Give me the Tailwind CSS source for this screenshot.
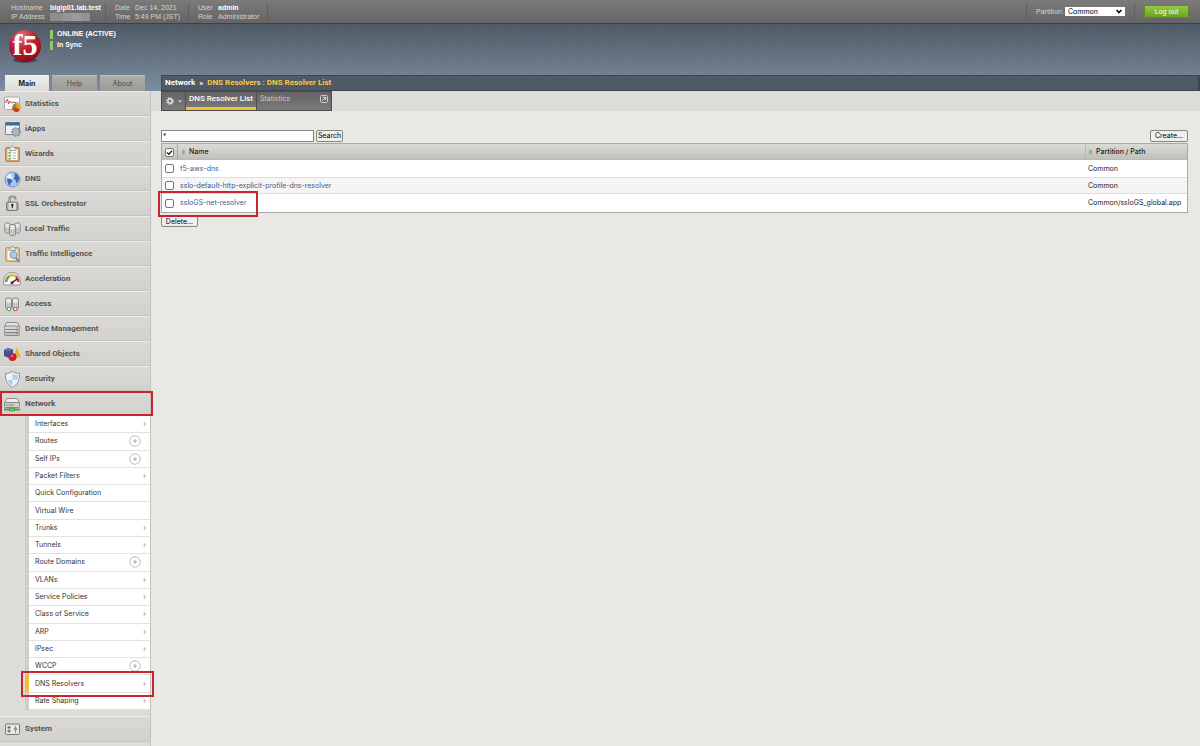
<!DOCTYPE html>
<html lang="en">
  <head>
    <meta charset="UTF-8" />
    <meta name="viewport" content="width=device-width, initial-scale=1.0" />
    <title>BIG-IP - DNS Resolver List</title>
    <script src="https://cdn.jsdelivr.net/npm/@tailwindcss/browser@4"></script>
  </head>
  <body class="flex min-h-screen flex-col bg-[#e9e8e4] font-[Inter,'Liberation_Sans',sans-serif] text-[7px] leading-[10px] text-[#222]">
    <!-- shared glyphs -->
    <svg class="hidden">
      <symbol id="arrow" viewBox="0 0 4 6"><path d="M1 1L2.800 3L1 5z" fill="#ccc" stroke="#bbb" stroke-width="0.500" /></symbol>
      <symbol id="plus" viewBox="0 0 12 12">
        <circle cx="6" cy="6" r="5.2" fill="#fff" stroke="#b5b5b5" stroke-width="0.9" />
        <path d="M6 4v4M4 6h4" stroke="#aaa" stroke-width="1" />
      </symbol>
      <symbol id="sort" viewBox="0 0 5 7"><path d="M0.3 3L2.5 0.5L4.7 3zM0.3 4L2.5 6.5L4.7 4z" fill="#8d8d8b" /></symbol>
      <symbol id="server" viewBox="0 0 7 13">
        <rect x="0.5" y="1" width="6" height="11" rx="1.800" fill="#d2d2d0" stroke="#777" stroke-width="0.8" />
        <path d="M1.500 3h4M1.500 4.800h4" stroke="#fff" stroke-width="0.9" />
        <path d="M2.300 6v5M4.700 6v5" stroke="#a5a5a3" stroke-width="0.6" />
      </symbol>
    </svg>

    <!-- status bar -->
    <header class="flex h-[24px] items-center justify-between border-b border-[#3e4246] bg-linear-to-b from-[#7b7b7b] to-[#646464] font-['Liberation_Sans',sans-serif] leading-[9px] text-[#d4d4d4]">
      <div class="flex h-full items-center">
        <dl class="grid h-[18px] grid-cols-[39px_auto] border-r border-[#606060] pr-[9px] pl-[11px]">
          <dt>Hostname</dt>
          <dd class="w-[46px] font-bold whitespace-nowrap text-white">bigip01.lab.test</dd>
          <dt>IP Address</dt>
          <dd class="flex h-[8px] w-[40px] self-end">
            <span class="w-[13px] bg-[#8d8d8d]"></span>
            <span class="w-[9px] bg-[#959595]"></span>
            <span class="w-[9px] bg-[#9b9b9b]"></span>
            <span class="w-[9px] bg-[#939393]"></span>
          </dd>
        </dl>
        <dl class="grid h-[18px] grid-cols-[20px_44px] border-r border-[#606060] pr-[9px] pl-[9px] whitespace-nowrap">
          <dt>Date</dt>
          <dd>Dec 14, 2021</dd>
          <dt>Time</dt>
          <dd>5:49 PM (JST)</dd>
        </dl>
        <dl class="grid h-[18px] grid-cols-[20px_40px] border-r border-[#606060] pr-[9px] pl-[9px]">
          <dt>User</dt>
          <dd class="font-bold text-white">admin</dd>
          <dt>Role</dt>
          <dd>Administrator</dd>
        </dl>
      </div>
      <div class="flex h-[18px] items-center border-l border-[#606060] pr-[11px] pl-[9px]">
        <label for="partition" class="w-[29px]">Partition:</label>
        <div class="relative h-[9px] w-[60px]">
          <select id="partition" class="block h-[9px] w-full appearance-none bg-white pl-[3px] font-[Inter] text-[7px] leading-[9px] text-black">
            <option>Common</option>
          </select>
          <svg class="pointer-events-none absolute top-[2px] right-[3px] h-[5px] w-[6px]" viewBox="0 0 6 5"><path d="M0.6 1L3 3.6L5.4 1" fill="none" stroke="#000" stroke-width="1.5" /></svg>
        </div>
        <div class="ml-[9px] h-[18px] w-px bg-[#606060]"></div>
        <button class="ml-[9px] h-[13px] w-[45px] border border-[#5d8a25] bg-linear-to-b from-[#96c944] to-[#6aa51c] text-white">Log out</button>
      </div>
    </header>

    <!-- banner with logo, side tabs and page title -->
    <div class="bg-[repeating-linear-gradient(135deg,#ffffff09_0px,#ffffff09_1px,transparent_1px,transparent_3px),linear-gradient(#4d5863,#7a8ca0)]">
      <div class="flex h-[51px] gap-[8px] pt-[5px] pl-[8px]">
        <svg class="h-[36px] w-[34px]" viewBox="0 0 34 36">
          <defs>
            <radialGradient id="ball" cx="0.4" cy="0.2" r="0.8">
              <stop offset="0" stop-color="#e27878" />
              <stop offset="0.5" stop-color="#c4202c" />
              <stop offset="1" stop-color="#8a0d18" />
            </radialGradient>
          </defs>
          <ellipse cx="17" cy="31" rx="12" ry="3" fill="#303943" opacity="0.7" />
          <circle cx="17" cy="17" r="16" fill="url(#ball)" />
          <text x="17" y="26" text-anchor="middle" font-family="Liberation Serif" font-weight="bold" font-size="30" fill="#fff">f5</text>
        </svg>
        <div class="flex flex-col gap-px font-['Liberation_Sans',sans-serif] font-bold text-white">
          <div class="flex h-[10px] items-center gap-[4px]"><span class="h-[9px] w-[3px] bg-[#95c76b]"></span>ONLINE (ACTIVE)</div>
          <div class="flex h-[10px] items-center gap-[4px]"><span class="h-[9px] w-[3px] bg-[#95c76b]"></span>In Sync</div>
        </div>
      </div>
      <div class="flex h-[16px] items-stretch">
        <nav class="flex w-[150px] shrink-0 gap-[3px] pl-[5px] text-[#4a4a48]">
          <button class="w-[44px] border-t border-[#f4f4f2] bg-linear-to-b from-[#eeeeec] to-[#dcdcd8] font-bold text-[#222]">Main</button>
          <button class="w-[45px] border-t border-[#bdbdba] bg-linear-to-b from-[#adada9] to-[#9a9a97]">Help</button>
          <button class="w-[45px] border-t border-[#bdbdba] bg-linear-to-b from-[#adada9] to-[#9a9a97]">About</button>
        </nav>
        <div class="ml-[11px] flex grow items-center gap-[4px] border border-r-2 border-[#3f464e] bg-[#505a67] pl-[3px] font-[Roboto,sans-serif] text-[8px] font-bold text-white">
          <span>Network</span><span>»</span><span class="text-[#f6c944]">DNS Resolvers : DNS Resolver List</span>
        </div>
      </div>
    </div>

    <div class="flex grow">
      <!-- side menu -->
      <aside class="w-[151px] shrink-0 border-r border-[#c2c1bd] bg-[#dddcd8]">
        <ul class="font-[Roboto,sans-serif] text-[8px] font-bold text-[#555553] *:flex *:h-[25px] *:items-center *:gap-[4px] *:border-t *:border-b *:border-t-[#ecebe8] *:border-b-[#c6c5c1] *:bg-linear-to-b *:from-[#dad9d5] *:to-[#d2d1cd] *:pl-[3px]">
          <li>
            <svg class="size-[18px]" viewBox="0 0 18 18">
              <rect x="1.5" y="2" width="15" height="12.5" rx="1" fill="#fafafa" stroke="#aaa" />
              <path d="M3 8V6l1.500-2 1 5 1.500-3 1.500 2 2-1 3 1h2" fill="none" stroke="#b5525a" stroke-width="1" />
              <circle cx="13.5" cy="12.5" r="4.200" fill="#e4a72c" />
              <path d="M13.5 12.5V8.300A4.200 4.200 0 0 0 9.300 12.500z" fill="#6f9f35" />
              <path d="M13.5 12.5H9.300A4.200 4.200 0 0 0 17 15z" fill="#c73c28" />
            </svg>
            <a href="#">Statistics</a>
          </li>
          <li>
            <svg class="size-[18px]" viewBox="0 0 18 18">
              <rect x="2.500" y="2.500" width="14" height="12" rx="0.5" fill="#eef0f3" stroke="#70889f" />
              <path d="M2.500 4h14" stroke="#386c9f" stroke-width="3" />
              <circle cx="13" cy="12" r="3.800" fill="none" stroke="#77848e" stroke-width="2" stroke-dasharray="1.7 1" />
              <circle cx="13" cy="12" r="3.500" fill="#b3bcc3" stroke="#8a969f" stroke-width="0.8" />
              <circle cx="13" cy="12" r="1.100" fill="#e5e5e5" stroke="#74818b" stroke-width="0.500" />
            </svg>
            <a href="#">iApps</a>
          </li>
          <li>
            <svg class="size-[18px]" viewBox="0 0 18 18">
              <rect x="2.500" y="2.500" width="14" height="14" rx="1.500" fill="#d8a35f" stroke="#a87a42" stroke-width="0.8" />
              <rect x="4.500" y="4" width="10" height="11" fill="#fff" />
              <path d="M6 5.500V3.500L8 2.500Q9.500 -1 11 2.500L13 3.500V5.500z" fill="#eee" stroke="#888" stroke-width="0.7" />
              <path d="M5.500 7.500l1 1 1.500-2M5.500 10.500l1 1 1.500-2M5.500 13.500l1 1 1.500-2" fill="none" stroke="#52a53f" stroke-width="1.100" />
              <path d="M9.500 8h3.500M9.500 11h3.500M9.500 13.500h3.500" stroke="#aaa" />
            </svg>
            <a href="#">Wizards</a>
          </li>
          <li>
            <svg class="size-[18px]" viewBox="0 0 18 18">
              <circle cx="9.500" cy="9.500" r="7.500" fill="#a9c5f3" stroke="#6485bb" stroke-width="0.8" />
              <path d="M3 7L6 4 9 3.500 8 6 10 8 7.500 9.500 6.500 8 4.500 8.500z" fill="#e9f2fd" />
              <path d="M4 8.500L8 9 9.500 11 7.500 13.500 7 16Q4.500 14 4 8.500z" fill="#3f69ad" />
              <path d="M11 3.500L14 4 16.500 8 15.500 11 13.500 13.500 12.500 10 10.500 8.500 12 6z" fill="#3f69ad" />
            </svg>
            <a href="#">DNS</a>
          </li>
          <li>
            <svg class="size-[18px]" viewBox="0 0 18 18">
              <path d="M6.500 8V4Q6.500 1.500 9.500 1.500T12.500 4.500" fill="none" stroke="#77776a" stroke-width="2.200" />
              <path d="M6.500 8V4Q6.500 1.500 9.500 1.500T12.500 4.500" fill="none" stroke="#c5c5b5" stroke-width="0.800" />
              <rect x="3.500" y="7" width="11.500" height="8.500" rx="1.500" fill="#a9a9a7" stroke="#666" stroke-width="0.8" />
              <rect x="5.500" y="7.800" width="7.500" height="6.800" fill="#dededc" />
              <circle cx="9.300" cy="10" r="1.300" fill="#333" />
              <path d="M9.300 10v3.300" stroke="#333" stroke-width="1.200" />
            </svg>
            <a href="#">SSL Orchestrator</a>
          </li>
          <li>
            <svg class="size-[18px]" viewBox="0 0 18 18">
              <use href="#server" x="1" y="2" width="7" height="12" />
              <use href="#server" x="11" y="2" width="7" height="12" />
              <use href="#server" x="6" y="3.500" width="7" height="13" />
            </svg>
            <a href="#">Local Traffic</a>
          </li>
          <li>
            <svg class="size-[18px]" viewBox="0 0 18 18">
              <rect x="2.500" y="2.500" width="14" height="14" rx="1.500" fill="#dfb680" stroke="#b99467" stroke-width="0.8" />
              <rect x="4.500" y="4" width="10" height="11" fill="#f5f5f5" />
              <path d="M6 5.500V3.500L8 2.500Q9.500 -1 11 2.500L13 3.500V5.500z" fill="#ddd" stroke="#888" stroke-width="0.7" />
              <path d="M12.500 12.500l4 4.500" stroke="#888" stroke-width="2" />
              <circle cx="10.500" cy="10" r="3.500" fill="#a8cbea" stroke="#8098aa" />
            </svg>
            <a href="#">Traffic Intelligence</a>
          </li>
          <li>
            <svg class="size-[18px]" viewBox="0 0 18 18">
              <path d="M0.500 13Q1 2.500 9 2.500T17.500 13Q17.500 15 16 15H2Q0.500 15 0.500 13z" fill="#f8f8f6" stroke="#777" stroke-width="0.8" />
              <path d="M3 12Q3.500 8 6.500 6" fill="none" stroke="#60a94b" stroke-width="2.400" />
              <path d="M6.500 6Q10 4 13 6.500" fill="none" stroke="#e7b23c" stroke-width="2.400" />
              <path d="M13 6.500Q15 8.500 15.500 12" fill="none" stroke="#c9302c" stroke-width="2.400" />
              <path d="M8 13.500l6-4.500" stroke="#222" stroke-width="1.500" />
              <circle cx="9" cy="12.800" r="1.500" fill="#7c1d1d" />
            </svg>
            <a href="#">Acceleration</a>
          </li>
          <li>
            <svg class="size-[18px]" viewBox="0 0 18 18">
              <use href="#server" x="2" y="2" width="7" height="13" />
              <use href="#server" x="9" y="2" width="7" height="13" />
              <circle cx="6" cy="14" r="1.700" fill="#fff" stroke="#54a849" stroke-width="1.100" />
              <circle cx="12.500" cy="14" r="1.700" fill="#fff" stroke="#d25050" stroke-width="1.100" />
            </svg>
            <a href="#">Access</a>
          </li>
          <li>
            <svg class="size-[18px]" viewBox="0 0 18 18">
              <path d="M3.500 2.500h11l2 4h-15z" fill="#e3e3e1" stroke="#777" stroke-width="0.8" />
              <rect x="1.500" y="6" width="15" height="3.500" rx="1.200" fill="#d5d5d3" stroke="#777" stroke-width="0.8" />
              <rect x="1.500" y="9.500" width="15" height="3" rx="1.200" fill="#d5d5d3" stroke="#777" stroke-width="0.8" />
              <rect x="1.500" y="12.500" width="15" height="3" rx="1.200" fill="#c5c5c3" stroke="#777" stroke-width="0.8" />
              <path d="M13 8h2M13 11h2M13 14h2" stroke="#c66" stroke-width="0.8" />
            </svg>
            <a href="#">Device Management</a>
          </li>
          <li>
            <svg class="size-[18px]" viewBox="0 0 18 18">
              <path d="M1 5l4-2 5 1.500v6L6 13l-5-2z" fill="#3d548d" />
              <path d="M1 5l4-2 5 1.500L6 6z" fill="#6579ab" />
              <path d="M13.500 2l4.500 10-7 1.500z" fill="#e9ae41" />
              <circle cx="9.500" cy="12" r="4" fill="#c91f33" />
              <circle cx="9" cy="11" r="1.300" fill="#e86373" />
            </svg>
            <a href="#">Shared Objects</a>
          </li>
          <li>
            <svg class="size-[18px]" viewBox="0 0 18 18">
              <path d="M9.500 1.500Q13 3.500 16.500 3.500Q17.500 13 9.500 17.500Q1.500 13 2.500 3.500Q6 3.500 9.500 1.500z" fill="#edf3f8" stroke="#8a98a5" />
              <path d="M9.500 3.500Q12 5 15 5Q15.500 8 14.500 10H9.500z" fill="#b7d1e8" />
              <path d="M9.500 10H4.500Q6 14 9.500 15.800z" fill="#a8cbea" />
            </svg>
            <a href="#">Security</a>
          </li>
          <li class="relative">
            <svg class="size-[18px]" viewBox="0 0 18 18">
              <path d="M4 3.500h10l2.500 4.500h-15z" fill="#eee" stroke="#777" stroke-width="0.8" />
              <rect x="1.500" y="7.500" width="15" height="5" rx="1" fill="#cfcfcd" stroke="#777" stroke-width="0.8" />
              <path d="M3 10h8" stroke="#888" />
              <path d="M1 14.500h16M9 13v2" stroke="#4ca640" stroke-width="2" />
              <rect x="6.500" y="13" width="5" height="3" fill="#72c262" stroke="#398732" stroke-width="0.6" />
            </svg>
            <a href="#">Network</a>
            <span class="pointer-events-none absolute -top-px left-0 h-[25px] w-[153px] border-2 border-[#c9252d]"></span>
          </li>
        </ul>

        <!-- Network submenu: rows share the height evenly -->
        <ul class="ml-[25px] grid min-h-[294px] auto-rows-fr border-l-4 border-[#cfcecb] bg-white text-[#333] *:flex *:items-center *:justify-between *:border-b *:border-[#e2e2e0] *:pr-[3px] *:pl-[6px]">
          <li><a href="#">Interfaces</a><svg class="h-[6px] w-[4px]"><use href="#arrow" /></svg></li>
          <li><a href="#">Routes</a><button aria-label="Add route" class="mr-[6px]"><svg class="size-[12px]"><use href="#plus" /></svg></button></li>
          <li><a href="#">Self IPs</a><button aria-label="Add self IP" class="mr-[6px]"><svg class="size-[12px]"><use href="#plus" /></svg></button></li>
          <li><a href="#">Packet Filters</a><svg class="h-[6px] w-[4px]"><use href="#arrow" /></svg></li>
          <li><a href="#">Quick Configuration</a></li>
          <li><a href="#">Virtual Wire</a></li>
          <li><a href="#">Trunks</a><svg class="h-[6px] w-[4px]"><use href="#arrow" /></svg></li>
          <li><a href="#">Tunnels</a><svg class="h-[6px] w-[4px]"><use href="#arrow" /></svg></li>
          <li><a href="#">Route Domains</a><button aria-label="Add route domain" class="mr-[6px]"><svg class="size-[12px]"><use href="#plus" /></svg></button></li>
          <li><a href="#">VLANs</a><svg class="h-[6px] w-[4px]"><use href="#arrow" /></svg></li>
          <li><a href="#">Service Policies</a><svg class="h-[6px] w-[4px]"><use href="#arrow" /></svg></li>
          <li><a href="#">Class of Service</a><svg class="h-[6px] w-[4px]"><use href="#arrow" /></svg></li>
          <li><a href="#">ARP</a><svg class="h-[6px] w-[4px]"><use href="#arrow" /></svg></li>
          <li><a href="#">IPsec</a><svg class="h-[6px] w-[4px]"><use href="#arrow" /></svg></li>
          <li><a href="#">WCCP</a><button aria-label="Add WCCP" class="mr-[6px]"><svg class="size-[12px]"><use href="#plus" /></svg></button></li>
          <li class="relative">
            <span class="absolute inset-y-0 -left-[4px] w-[4px] bg-[#e8c52f]"></span>
            <a href="#">DNS Resolvers</a><svg class="h-[6px] w-[4px]"><use href="#arrow" /></svg>
            <span class="pointer-events-none absolute -top-[4px] -left-[8px] h-[26px] w-[133px] border-2 border-[#c9252d]"></span>
          </li>
          <li><a href="#">Rate Shaping</a><svg class="h-[6px] w-[4px]"><use href="#arrow" /></svg></li>
        </ul>

        <div class="mt-[6px] flex h-[26px] items-center gap-[4px] border-y border-t-[#ecebe8] border-b-[#c6c5c1] bg-linear-to-b from-[#dad9d5] to-[#d2d1cd] pl-[3px] font-[Roboto,sans-serif] text-[8px] font-bold text-[#555553]">
          <svg class="size-[18px]" viewBox="0 0 18 18">
            <rect x="2.500" y="4" width="14" height="10.500" rx="1" fill="#e9e9e4" stroke="#777" />
            <path d="M6 6v7M12.500 6v7" stroke="#999" />
            <path d="M4.500 7.500h3M4.500 11h3" stroke="#666" stroke-width="1.500" />
            <path d="M12.500 6.500l2 2.500-2 2.500-2-2.500z" fill="#8e9a68" />
          </svg>
          <a href="#">System</a>
        </div>
      </aside>

      <main class="min-w-0 grow">
        <div class="bg-[#dddcd8] pl-[10px]">
          <nav class="flex h-[20px] w-[171px] border border-[#4c4c4c] bg-linear-to-b from-[#646464] to-[#7a7a7a] text-[#c9c9c9]">
            <button aria-label="Options" class="flex w-[24px] items-center justify-center gap-[4px] border-r border-[#4c4c4c]">
              <svg class="size-[8px]" viewBox="0 0 8 8">
                <circle cx="4" cy="4" r="3.200" fill="none" stroke="#eee" stroke-width="1.300" stroke-dasharray="1.250 1.260" />
                <circle cx="4" cy="4" r="2.100" fill="none" stroke="#eee" stroke-width="1.200" />
              </svg>
              <svg class="h-[3px] w-[4px]" viewBox="0 0 4 3"><path d="M0 0.500h4L2 2.500z" fill="#ddd" /></svg>
            </button>
            <a href="#" class="w-[70px] border-b-3 border-[#f3c332] pt-[2px] text-center font-[Roboto,sans-serif] text-[8px] font-medium whitespace-nowrap text-white">DNS Resolver List</a>
            <a href="#" class="flex grow items-start justify-between border-l border-[#4c4c4c] pt-[2px] pr-[3px] pl-[3px]">
              Statistics
              <svg class="mt-px size-[8px]" viewBox="0 0 8 8">
                <rect x="0.500" y="0.500" width="7" height="7" rx="1" fill="none" stroke="#ccc" />
                <path d="M2.200 5.800L5.500 2.500M3 2.300h2.700V5" fill="none" stroke="#ddd" />
              </svg>
            </a>
          </nav>
        </div>

        <form class="pt-[19px] pr-[12px] pl-[10px]">
          <div class="flex h-[12px] gap-[2px]">
            <input type="text" aria-label="Search" value="*" class="h-[12px] w-[153px] border border-[#858585] bg-white px-px" />
            <button type="button" class="h-[12px] w-[27px] rounded-xs border border-[#858585] bg-[#efefef] text-black">Search</button>
            <button type="button" class="ml-auto h-[12px] w-[38px] rounded-xs border border-[#858585] bg-[#efefef] text-black">Create...</button>
          </div>
          <table class="mt-px w-full table-fixed border-separate border-spacing-0 border border-[#a9a9a6] bg-white text-left">
            <colgroup>
              <col class="w-[16px]" />
              <col />
              <col class="w-[102px]" />
            </colgroup>
            <thead class="bg-linear-to-b from-[#dadad7] to-[#bfbfba]">
              <tr class="h-[16px]">
                <th class="border-r border-[#aaa9a5]">
                  <span class="relative mx-auto block size-[9px]">
                    <input type="checkbox" checked aria-label="Select all" class="block size-[9px] appearance-none rounded-xs border border-[#777] bg-white" />
                    <svg class="pointer-events-none absolute inset-0 size-[9px]" viewBox="0 0 9 9"><path d="M2 4.500L3.800 6.300L7 2.700" fill="none" stroke="#222" stroke-width="1.300" /></svg>
                  </span>
                </th>
                <th class="border-b border-[#b9b9b5] pl-[3px] font-medium"><svg class="mr-[3px] inline h-[6px] w-[5px]"><use href="#sort" /></svg>Name</th>
                <th class="border-b border-l border-[#b9b9b5] pl-[2px] font-medium"><svg class="mr-[3px] inline h-[6px] w-[5px]"><use href="#sort" /></svg>Partition / Path</th>
              </tr>
            </thead>
            <tbody>
              <tr class="h-[17px]">
                <td class="pr-px"><input type="checkbox" aria-label="f5-aws-dns" class="mx-auto block size-[9px] appearance-none rounded-xs border border-[#777] bg-white" /></td>
                <td class="pl-[2px]"><a href="#" class="text-[#45598c]">f5-aws-dns</a></td>
                <td class="pl-[3px]">Common</td>
              </tr>
              <tr class="h-[17px] bg-[#f6f5f3] *:border-y *:border-[#dededa]">
                <td class="pr-px"><input type="checkbox" aria-label="sslo-default-http-explicit-profile-dns-resolver" class="mx-auto block size-[9px] appearance-none rounded-xs border border-[#777] bg-white" /></td>
                <td class="pl-[2px]"><a href="#" class="text-[#45598c]">sslo-default-http-explicit-profile-dns-resolver</a></td>
                <td class="pl-[3px]">Common</td>
              </tr>
              <tr class="h-[18px]">
                <td class="relative pr-px">
                  <input type="checkbox" aria-label="ssloGS-net-resolver" class="mx-auto block size-[9px] appearance-none rounded-xs border border-[#777] bg-white" />
                  <span class="pointer-events-none absolute -top-[3px] -left-[4px] h-[26px] w-[100px] border-2 border-[#c9252d]"></span>
                </td>
                <td class="pl-[2px]"><a href="#" class="text-[#45598c]">ssloGS-net-resolver</a></td>
                <td class="pl-[3px] whitespace-nowrap">Common/ssloGS_global.app</td>
              </tr>
            </tbody>
          </table>
          <button type="button" class="mt-[3px] block h-[11px] w-[37px] rounded-xs border border-[#858585] bg-[#efefef] leading-[9px] text-black">Delete...</button>
        </form>
      </main>
    </div>
  </body>
</html>
